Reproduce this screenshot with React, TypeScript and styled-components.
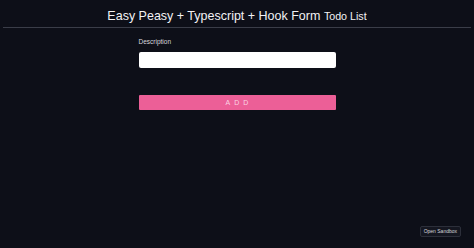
import React from "react";
import styled, { createGlobalStyle } from "styled-components";

const Global = createGlobalStyle`
  html, body { margin: 0; padding: 0; background: #0d0f18; }
  body { font-family: "Liberation Sans", Arial, sans-serif; color: #e8e8ec; }
  #root { min-height: 248px; }
`;

const Page = styled.div`
  width: 474px;
  height: 248px;
  background: #0d0f18;
  display: flex;
  flex-direction: column;
  position: relative;
  overflow: hidden;
`;

const Header = styled.header`
  margin: 0 3px;
  height: 28px;
  border-bottom: 1px solid #3a3d48;
  display: flex;
  align-items: center;
  justify-content: center;
  box-sizing: border-box;
  padding-top: 4px;
`;

const Title = styled.h1`
  margin: 0;
  font-weight: 400;
  font-size: 12.5px;
  color: #f2f2f4;
  white-space: nowrap;
  transform: scaleY(1.08);
`;

const Small = styled.span`
  font-size: 10.7px;
`;

const Form = styled.form`
  width: 197px;
  margin: 10px auto 0;
  display: flex;
  flex-direction: column;
`;

const Label = styled.label`
  font-size: 6.5px;
  color: #d8d8de;
  line-height: 8px;
  margin-bottom: 6px;
`;

const Input = styled.input`
  height: 16px;
  box-sizing: border-box;
  border: none;
  border-radius: 2px;
  background: #ffffff;
  outline: none;
  padding: 0 4px;
`;

const AddButton = styled.button`
  margin-top: 27px;
  height: 15px;
  border: none;
  border-radius: 1px;
  background: #ec5f97;
  color: #fbd3e3;
  font-family: "Liberation Sans", Arial, sans-serif;
  font-size: 7px;
  letter-spacing: 4px;
  padding: 0 0 0 4px;
  cursor: pointer;
`;

const Sandbox = styled.button`
  position: absolute;
  right: 13px;
  bottom: 11px;
  height: 11px;
  padding: 0 3px;
  background: #141620;
  border: 1px solid #2c2f3a;
  border-radius: 2px;
  color: #d6d6dc;
  font-family: "Liberation Sans", Arial, sans-serif;
  font-size: 5px;
  line-height: 9px;
`;

export default function App() {
  return (
    <Page>
      <Global />
      <Header>
        <Title>
          Easy Peasy + Typescript + Hook Form <Small>Todo List</Small>
        </Title>
      </Header>
      <Form onSubmit={(e) => e.preventDefault()}>
        <Label htmlFor="desc">Description</Label>
        <Input id="desc" />
        <AddButton type="submit">ADD</AddButton>
      </Form>
      <Sandbox>Open Sandbox</Sandbox>
    </Page>
  );
}
